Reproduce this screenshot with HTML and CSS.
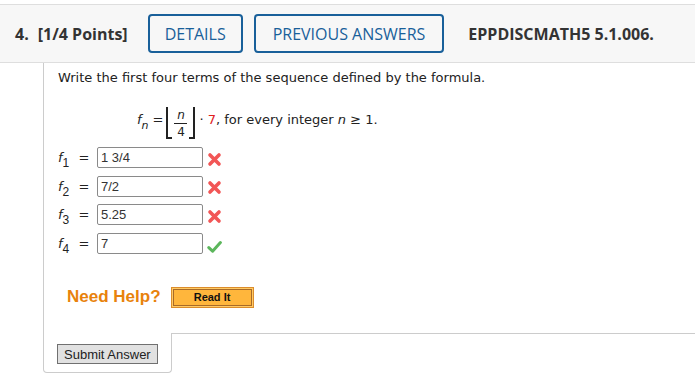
FILE: index.html
```html
<!DOCTYPE html>
<html>
<head>
<meta charset="utf-8">
<link rel="stylesheet" href="styles.css">
</head>
<body>
<div class="header">
  <span class="qnum">4.</span>
  <span class="points">[1/4 Points]</span>
  <button class="tab-btn first">DETAILS</button>
  <button class="tab-btn wide">PREVIOUS ANSWERS</button>
  <span class="code">EPPDISCMATH5 5.1.006.</span>
</div>
<div class="question">
  <div class="qbody">
    <p class="prompt">Write the first four terms of the sequence defined by the formula.</p>
    <div class="formula">
      <span class="var">f<sub>n</sub></span>
      <span class="feq">=</span>
      <span class="floor">
        <span class="lb"></span>
        <span class="frac"><span class="num">n</span><span class="bar"></span><span class="den">4</span></span>
        <span class="rb"></span>
      </span>
      <span class="rest">· <span class="red">7</span>, for every integer <i>n</i> ≥ 1.</span>
    </div>
    <div class="answers">
      <div class="row">
        <span class="lbl"><i>f</i><sub>1</sub></span><span class="eq">=</span>
        <input class="ans" type="text" value="1 3/4" readonly>
        <svg class="icon" viewBox="0 0 15 15" width="15" height="15"><path d="M3 3 L12 12 M12 3 L3 12" stroke="#f25656" stroke-width="3.6" stroke-linecap="round"/></svg>
      </div>
      <div class="row">
        <span class="lbl"><i>f</i><sub>2</sub></span><span class="eq">=</span>
        <input class="ans" type="text" value="7/2" readonly>
        <svg class="icon" viewBox="0 0 15 15" width="15" height="15"><path d="M3 3 L12 12 M12 3 L3 12" stroke="#f25656" stroke-width="3.6" stroke-linecap="round"/></svg>
      </div>
      <div class="row">
        <span class="lbl"><i>f</i><sub>3</sub></span><span class="eq">=</span>
        <input class="ans" type="text" value="5.25" readonly>
        <svg class="icon" viewBox="0 0 15 15" width="15" height="15"><path d="M3 3 L12 12 M12 3 L3 12" stroke="#f25656" stroke-width="3.6" stroke-linecap="round"/></svg>
      </div>
      <div class="row">
        <span class="lbl"><i>f</i><sub>4</sub></span><span class="eq">=</span>
        <input class="ans" type="text" value="7" readonly>
        <svg class="icon check" viewBox="0 0 15 15" width="15" height="15"><path d="M1.8 8.6 L5.6 12.2 L13.4 3.6" stroke="#5cb65c" stroke-width="3" fill="none" stroke-linecap="round" stroke-linejoin="round"/></svg>
      </div>
    </div>
    <div class="help">
      <span class="need">Need Help?</span>
      <button class="readit">Read It</button>
    </div>
  </div>
  <div class="foot">
    <div class="submit-cell"><button class="submit">Submit Answer</button></div>
    <div class="filler"></div>
  </div>
</div>
</body>
</html>
```
FILE: styles.css
```css
body {
  margin: 0;
  padding-top: 4px;
  background: #fff;
  font-family: "DejaVu Sans", Verdana, sans-serif;
  color: #222;
}
.header {
  display: flex;
  align-items: center;
  height: 57px;
  border-top: 1px solid #dedede;
  border-bottom: 1px solid #dedede;
  background: #f7f7f7;
  padding-left: 15px;
  font-family: "Open Sans", sans-serif;
  font-size: 16px;
  color: #333;
}
.qnum, .points, .code { font-weight: 700; }
.points { margin-left: 9px; }
.tab-btn {
  margin-left: 11px;
  height: 39px;
  padding: 0 15px;
  border: 2px solid #19609a;
  border-radius: 4px;
  background: transparent;
  color: #19609a;
  font-family: "Open Sans", sans-serif;
  font-size: 16px;
}
.tab-btn.first { margin-left: 20px; }
.tab-btn.wide { padding: 0 17px; }
.code { margin-left: 24px; }

.question { margin-left: 43px; }
.qbody {
  border-left: 1px solid #ccc;
  padding: 7px 0 25px 14px;
}
.prompt {
  margin: 0;
  font-size: 13px;
  line-height: 16px;
}
.formula {
  display: flex;
  align-items: center;
  height: 32px;
  margin: 21px 0 0 79px;
  font-size: 13px;
  line-height: 16px;
}
.var, .feq, .rest { margin-bottom: 6px; }
.var { font-style: italic; }
.var sub, .lbl sub { font-style: italic; font-size: 11px; vertical-align: -5px; line-height: 0; }
.lbl sub { font-style: normal; font-family: "Liberation Sans", Arial, sans-serif; font-size: 12px; }
.feq { margin-left: 4px; margin-right: 3px; }
.floor { display: flex; align-items: stretch; height: 32px; }
.lb, .rb { width: 4px; border-bottom: 2px solid #222; }
.lb { border-left: 2px solid #222; }
.rb { border-right: 2px solid #222; }
.frac {
  display: flex;
  flex-direction: column;
  align-items: center;
  justify-content: center;
  padding: 0 2px;
  font-size: 12px;
  line-height: 14px;
}
.num { font-style: italic; }
.bar { width: 13px; height: 1px; margin: 1px 0; background: #222; }
.rest { margin-left: 4px; }
.red { color: #e0201e; }

.answers {
  display: flex;
  flex-direction: column;
  gap: 7.5px;
  margin-top: 8px;
}
.row { display: flex; align-items: center; height: 21px; }
.lbl { width: 20px; font-size: 13px; }
.eq { width: 12px; text-align: center; font-size: 13px; }
.ans {
  box-sizing: border-box;
  width: 106px;
  height: 21px;
  margin: 0 0 0 7px;
  padding: 0 3px;
  border: 1px solid #8a8a8a;
  border-radius: 2px;
  font-family: "Liberation Sans", Arial, sans-serif;
  font-size: 13px;
  color: #333;
  background: #fff;
  outline: none;
}
.icon { margin-left: 4px; margin-top: 3px; }
.icon.check { margin-top: 6px; }

.help {
  display: flex;
  align-items: center;
  height: 21px;
  margin: 33px 0 0 9px;
}
.need {
  font-family: "Liberation Sans", Arial, sans-serif;
  font-weight: 700;
  font-size: 17px;
  color: #e8820c;
}
.readit {
  box-sizing: border-box;
  width: 83px;
  height: 21px;
  margin-left: 10px;
  padding: 0;
  border: 1px solid #dc8d2c;
  background: #ffb63c;
  box-shadow: inset 0 0 0 1px #ffca64, inset 0 0 0 2px #a86a28;
  font-family: "Liberation Sans", Arial, sans-serif;
  font-weight: 700;
  font-size: 11px;
  color: #111;
}

.foot { display: flex; }
.submit-cell {
  box-sizing: border-box;
  width: 129px;
  height: 40px;
  padding: 11px 0 0 13px;
  border: 1px solid #ccc;
  border-top: none;
  border-radius: 0 0 4px 4px;
}
.filler { flex: 1; border-top: 1px solid #ccc; }
.submit {
  height: 20px;
  padding: 0 6px;
  border: 1px solid #707070;
  border-radius: 0;
  background: #e1e1e1;
  font-family: "Liberation Sans", Arial, sans-serif;
  font-size: 13px;
  color: #222;
}
```
